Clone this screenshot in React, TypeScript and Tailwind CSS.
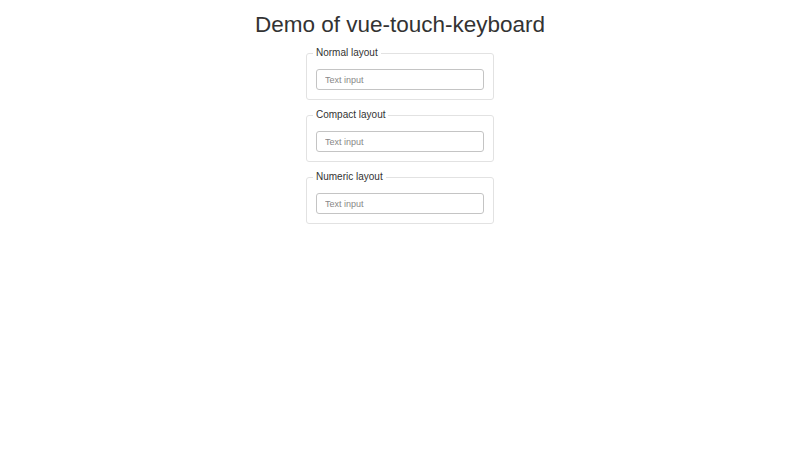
export default function App() {
  const sections = ["Normal layout", "Compact layout", "Numeric layout"];
  return (
    <div className="w-[800px] h-[450px] bg-white text-[#333]" style={{ fontFamily: '"Liberation Sans", Arial, sans-serif' }}>
      <h1 className="text-center text-[22.5px] leading-[28px] pt-[11px]">Demo of vue-touch-keyboard</h1>
      <div className="flex flex-col items-center gap-[9px] mt-[8px]">
        {sections.map((s) => (
          <fieldset key={s} className="w-[188px] border border-[#e2e2e2] rounded-[3px] px-[9px] pt-[10px] pb-[9px]">
            <legend className="-ml-[3px] px-[3px] text-[10px] leading-[12px]">{s}</legend>
            <input
              type="text"
              placeholder="Text input"
              className="block w-[168px] h-[21px] border border-[#c4c4c4] rounded-[3px] px-[8px] text-[9px] placeholder:text-[#888] outline-none"
            />
          </fieldset>
        ))}
      </div>
    </div>
  );
}
